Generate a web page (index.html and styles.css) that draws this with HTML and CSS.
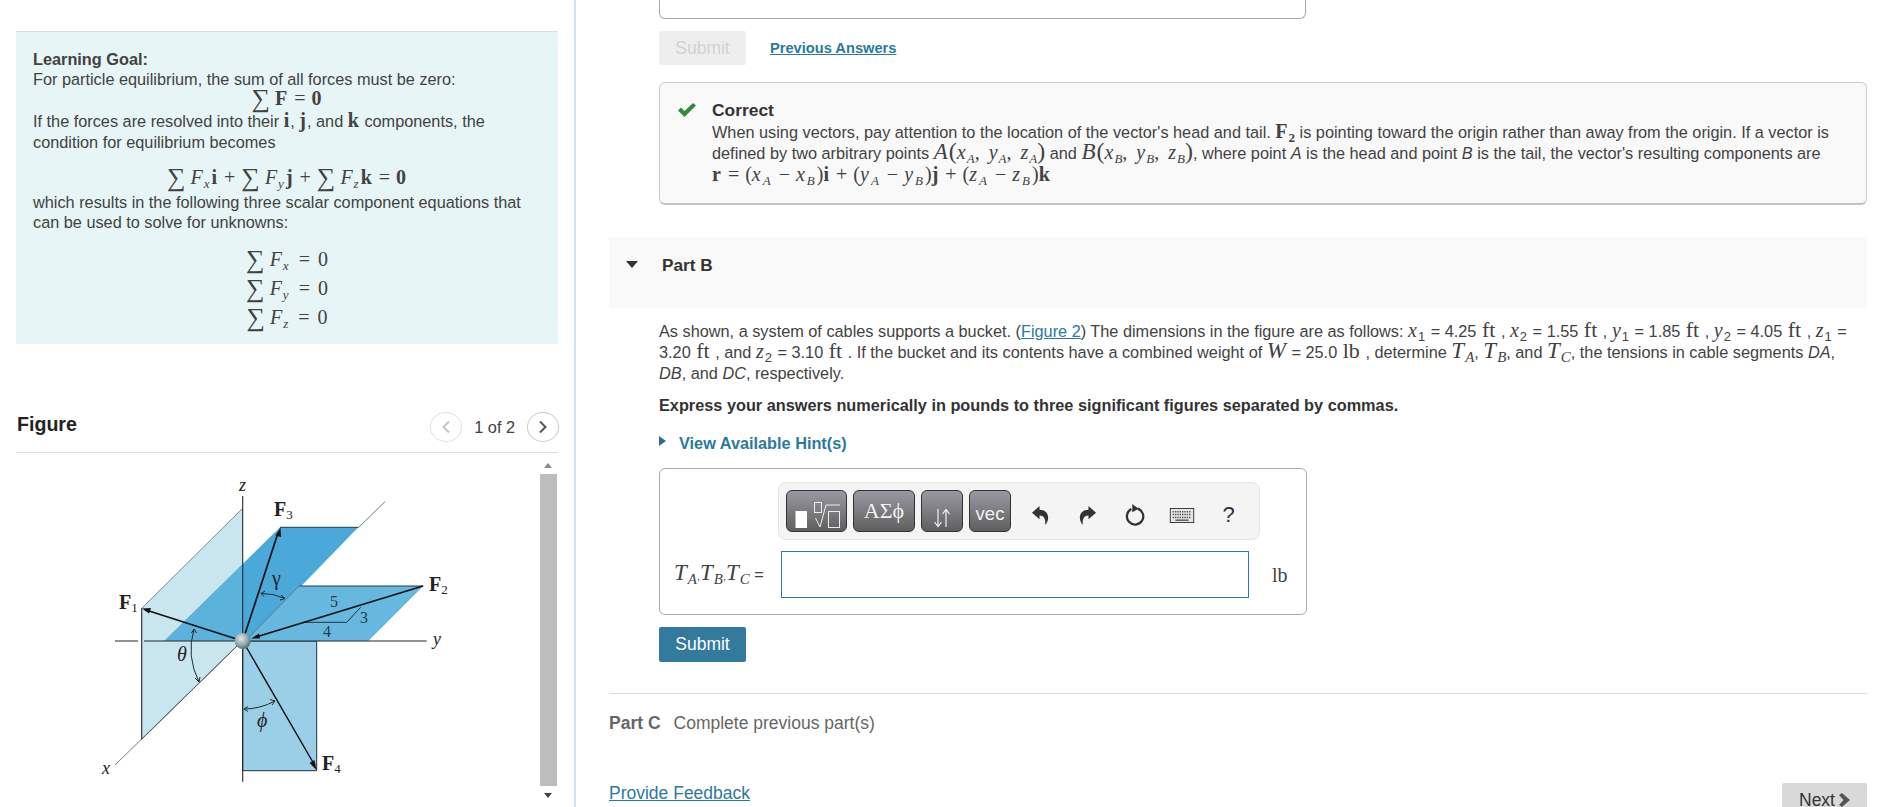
FILE: index.html
```html
<!DOCTYPE html>
<html lang="en">
<head>
    <meta charset="UTF-8">
    <title>Part B - Particle Equilibrium</title>
    <link rel="stylesheet" href="styles.css">
</head>
<body>
<div class="page">
    <div class="left-col">
        <div class="goal-box">
            <div class="goal-title">Learning Goal:</div>
            <div>For particle equilibrium, the sum of all forces must be zero:</div>
            <div class="eq eq-a"><span class="sum">∑</span><b class="vec">F</b><span class="mn op">=</span><b class="vec">0</b></div>
            <div class="after-a">If the forces are resolved into their <b class="vec">i</b>, <b class="vec">j</b>, and <b class="vec">k</b> components, the<br>condition for equilibrium becomes</div>
            <div class="eq eq-b"><span class="sum">∑</span><i class="mi">F<sub>x</sub></i><b class="vec">i</b><span class="mn op">+</span><span class="sum">∑</span><i class="mi">F<sub>y</sub></i><b class="vec">j</b><span class="mn op">+</span><span class="sum">∑</span><i class="mi">F<sub>z</sub></i><b class="vec">k</b><span class="mn op">=</span><b class="vec">0</b></div>
            <div>which results in the following three scalar component equations that<br>can be used to solve for unknowns:</div>
            <div class="eq-stack">
                <div class="eq"><span class="sum">∑</span><i class="mi">F<sub>x</sub></i><span class="mn op">=</span><span class="mn">0</span></div>
                <div class="eq"><span class="sum">∑</span><i class="mi">F<sub>y</sub></i><span class="mn op">=</span><span class="mn">0</span></div>
                <div class="eq"><span class="sum">∑</span><i class="mi">F<sub>z</sub></i><span class="mn op">=</span><span class="mn">0</span></div>
            </div>
        </div>

        <div class="figure-head">
            <span class="figure-title">Figure</span>
            <div class="pager">
                <span class="pager-btn pager-off">
                    <svg width="10" height="14" viewBox="0 0 10 14"><path d="M8 1.5 2.5 7 8 12.5" fill="none" stroke="#c4c4c4" stroke-width="2"/></svg>
                </span>
                <span class="pager-text">1 of 2</span>
                <span class="pager-btn">
                    <svg width="10" height="14" viewBox="0 0 10 14"><path d="M2 1.5 7.5 7 2 12.5" fill="none" stroke="#555" stroke-width="2"/></svg>
                </span>
            </div>
        </div>

        <div class="figure-panel">
            <svg class="diagram" width="360" height="337" viewBox="0 0 360 337">
                <defs>
                    <radialGradient id="ball" cx="0.4" cy="0.35" r="0.7">
                        <stop offset="0" stop-color="#dfe8ea"/>
                        <stop offset="0.6" stop-color="#8fa6ad"/>
                        <stop offset="1" stop-color="#4e6068"/>
                    </radialGradient>
                </defs>
                <polygon points="51.7,138.3 152.7,38.3 152.7,171 51.7,269.3" fill="#c9e6ef"/>
                <polygon points="152.7,171 226.7,171 226.7,300.7 152.7,300.7" fill="#9bcfe7" stroke="#22333c" stroke-width="1"/>
                <polygon points="74,171 190,57.3 152.7,94 152.7,171" fill="#5bb3dc"/>
                <polygon points="152.7,94 190,57.3 268.3,57.3 158,171 152.7,171" fill="#4aa9d8"/>
                <polygon points="209.3,116 333.3,116 278.3,171 156.7,171" fill="#66b8de"/>
                <path d="M190 57.3H268.3M209.3 116H333.3" stroke="#1f3f4f" stroke-width="1" fill="none"/>
                <path d="M295 31.7 268 58M209 116 158 168M147 176 25 295" stroke="#6f7b80" stroke-width="1" fill="none"/>
                <path d="M51.7 138.3 152.7 38.3" stroke="#7d8a90" stroke-width="1" fill="none"/>
                <path d="M51.7 269.3 147 176" stroke="#4b5a60" stroke-width="1" fill="none"/>
                <path d="M25 171H48M54 171H336.7M152.7 26V311.7M51.7 138.3V269.3" stroke="#22282b" stroke-width="1.1" fill="none"/>
                <path d="M213.3 152.3H256.7L270.7 137.3" stroke="#22333c" stroke-width="1" fill="none"/>
                <g stroke="#111" stroke-width="1.7" fill="none">
                    <path d="M152.7 171 56 140"/>
                    <path d="M152.7 171 188 63"/>
                    <path d="M333 116 166 167"/>
                </g>
                <path d="M152.7 171 224 294" stroke="#111" stroke-width="1.4" fill="none"/>
                <g fill="#111">
                    <polygon points="52,138.5 61,138 59,143.5"/>
                    <polygon points="190.5,57.5 191,67 185.500,65.5"/>
                    <polygon points="161,168.5 169,163.5 170,168.5"/>
                    <polygon points="226.5,300 219.5,293 224.5,290"/>
                </g>
                <g stroke="#22282b" stroke-width="1" fill="none">
                    <path d="M171 123.5Q183 123 195 128.5"/>
                    <path d="M104 159Q96 186 109 212"/>
                    <path d="M154 239Q170 239 185 231"/>
                    <path d="M175 121 171 123.5 174 126.5M191 125 195 128.5 190 130M101.5 163 104 159 106.5 163M105 208 109 212 110 207M158 236.5 154 239 158 241.5M180 229.5 185 231 182 235"/>
                </g>
                <circle cx="152.7" cy="171" r="8" fill="url(#ball)"/>
                <g class="fig-label">
                    <text x="29" y="139" class="fig-force">F<tspan class="fig-sub" dy="3">1</tspan></text>
                    <text x="184" y="46" class="fig-force">F<tspan class="fig-sub" dy="3">3</tspan></text>
                    <text x="339" y="121" class="fig-force">F<tspan class="fig-sub" dy="3">2</tspan></text>
                    <text x="232" y="300" class="fig-force">F<tspan class="fig-sub" dy="3">4</tspan></text>
                    <text x="149" y="21" font-style="italic">z</text>
                    <text x="12" y="304" font-style="italic">x</text>
                    <text x="343" y="175" font-style="italic">y</text>
                    <text x="182" y="115" class="fig-greek">γ</text>
                    <text x="87" y="191" class="fig-greek" font-style="italic">θ</text>
                    <text x="167" y="257" class="fig-greek" font-style="italic">ϕ</text>
                    <text x="240" y="137" class="fig-num">5</text>
                    <text x="270" y="153" class="fig-num">3</text>
                    <text x="233" y="167" class="fig-num">4</text>
                </g>
            </svg>
            <div class="scrollbar">
                <span class="arrow-up"></span>
                <div class="thumb"></div>
                <span class="arrow-down"></span>
            </div>
        </div>
    </div>

    <div class="right-col">
        <div class="prev-box"></div>
        <div class="submit-row">
            <button class="btn btn-off">Submit</button>
            <a href="#" class="prev-link">Previous Answers</a>
        </div>

        <div class="correct-box">
            <svg class="check" width="18" height="14" viewBox="0 0 18 14"><path d="M0 7.5 6.5 14 18 2.500 15 0 6.500 8 3 4.500Z" fill="#2f8a3a"/></svg>
            <div class="correct-text">
                <div class="correct-title">Correct</div>
                <div class="correct-line">When using vectors, pay attention to the location of the vector's head and tail. <b class="vec">F<sub>2</sub></b> is pointing toward the origin rather than away from the origin. If a vector is</div>
                <div class="correct-line">defined by two arbitrary points <i class="mi big">A</i><span class="mn big">(</span><i class="mi">x<sub>A</sub></i><span class="mn sep">,</span><i class="mi">y<sub>A</sub></i><span class="mn sep">,</span><i class="mi">z<sub>A</sub></i><span class="mn big">)</span> and <i class="mi big">B</i><span class="mn big">(</span><i class="mi">x<sub>B</sub></i><span class="mn sep">,</span><i class="mi">y<sub>B</sub></i><span class="mn sep">,</span><i class="mi">z<sub>B</sub></i><span class="mn big">)</span>, where point <i>A</i> is the head and point <i>B</i> is the tail, the vector's resulting components are</div>
                <div class="correct-line math-line"><b class="vec">r</b><span class="mn op">=</span><span class="mn">(</span><i class="mi">x<sub>A</sub></i><span class="mn op">−</span><i class="mi">x<sub>B</sub></i><span class="mn">)</span><b class="vec">i</b><span class="mn op">+</span><span class="mn">(</span><i class="mi">y<sub>A</sub></i><span class="mn op">−</span><i class="mi">y<sub>B</sub></i><span class="mn">)</span><b class="vec">j</b><span class="mn op">+</span><span class="mn">(</span><i class="mi">z<sub>A</sub></i><span class="mn op">−</span><i class="mi">z<sub>B</sub></i><span class="mn">)</span><b class="vec">k</b></div>
            </div>
        </div>

        <div class="part-bar">
            <span class="part-caret"></span>
            <span class="part-name">Part B</span>
        </div>

        <div class="part-body">
            <p class="problem">As shown, a system of cables supports a bucket. (<a href="#">Figure 2</a>) The dimensions in the figure are as follows: <i class="mi">x</i><sub class="num">1</sub> = 4.25 <span class="mn">ft</span> , <i class="mi">x</i><sub class="num">2</sub> = 1.55 <span class="mn">ft</span> , <i class="mi">y</i><sub class="num">1</sub> = 1.85 <span class="mn">ft</span> , <i class="mi">y</i><sub class="num">2</sub> = 4.05 <span class="mn">ft</span> , <i class="mi">z</i><sub class="num">1</sub> =<br>3.20 <span class="mn">ft</span> , and <i class="mi">z</i><sub class="num">2</sub> = 3.10 <span class="mn">ft</span> . If the bucket and its contents have a combined weight of <i class="mi big">W</i> = 25.0 <span class="mn">lb</span> , determine <i class="mi big">T<sub>A</sub></i>, <i class="mi big">T<sub>B</sub></i>, and <i class="mi big">T<sub>C</sub></i>, the tensions in cable segments <i>DA</i>,<br><i>DB</i>, and <i>DC</i>, respectively.</p>
            <p class="express">Express your answers numerically in pounds to three significant figures separated by commas.</p>
            <div class="hint-row">
                <span class="hint-caret"></span>
                <a href="#" class="hint-link">View Available Hint(s)</a>
            </div>

            <div class="answer-box">
                <div class="toolbar">
                    <span class="tool tool-templates">
                        <svg width="52" height="34" viewBox="0 0 52 34">
                            <rect x="4.5" y="17" width="11.5" height="17" fill="#fff"/>
                            <g fill="none" stroke="#eee" stroke-width="1">
                                <rect x="23.500" y="8.500" width="7" height="10"/>
                                <path d="M24.500 24 29 33 35 11H49"/>
                                <rect x="37.500" y="17.500" width="11" height="16"/>
                            </g>
                        </svg>
                    </span>
                    <span class="tool tool-greek">ΑΣϕ</span>
                    <span class="tool tool-arrows">
                        <svg width="18" height="20" viewBox="0 0 18 20"><path d="M5 1V18M1.500 14 5 18.500 8.500 14M13 19V2M9.500 6 13 1.500 16.500 6" fill="none" stroke="#f2f2f2" stroke-width="1.200"/></svg>
                    </span>
                    <span class="tool tool-vec">vec</span>
                    <span class="tool-icons">
                        <span class="tool-slot"><svg width="19" height="21" viewBox="0 0 20 22"><path d="M1 8 9 1V5C15 5 18.500 9 18 14 17.800 17 16.500 19.500 15 21 15.500 15 14 11 9 11V15Z" fill="#333"/></svg></span>
                        <span class="tool-slot"><svg width="19" height="21" viewBox="0 0 20 22"><path d="M19 8 11 1V5C5 5 1.500 9 2 14 2.200 17 3.500 19.500 5 21 4.500 15 6 11 11 11V15Z" fill="#333"/></svg></span>
                        <span class="tool-slot"><svg width="20" height="24" viewBox="0 0 22 24"><path d="M7 5.500A9 9 0 1 0 14 5" fill="none" stroke="#333" stroke-width="2.500"/><path d="M8 0 15 5 8 9Z" fill="#333"/></svg></span>
                        <span class="tool-slot"><svg width="26" height="15" viewBox="0 0 26 16"><rect x=".5" y=".5" width="25" height="15" fill="#e6e6e6" stroke="#333"/><path d="M3 4H23M3 7H23M3 10H23" stroke="#555" stroke-width="1.600" stroke-dasharray="1.500 1"/><path d="M6 13H20" stroke="#555" stroke-width="1.500"/></svg></span>
                        <span class="tool-slot tool-help">?</span>
                    </span>
                </div>
                <div class="answer-row">
                    <label class="answer-label"><i class="mi big">T<sub>A</sub></i><span class="comma">,</span><i class="mi big">T<sub>B</sub></i><span class="comma">,</span><i class="mi big">T<sub>C</sub></i> =</label>
                    <input type="text" class="answer-input">
                    <span class="unit">lb</span>
                </div>
            </div>
            <button class="btn btn-on">Submit</button>
        </div>

        <div class="part-c"><b>Part C</b><span>Complete previous part(s)</span></div>

        <div class="bottom-row">
            <a href="#" class="feedback">Provide Feedback</a>
            <span class="next-btn">Next <svg width="11" height="14" viewBox="0 0 11 14"><path d="M3 0 11 7 3 14 0 12 4.500 7 0 2Z" fill="#555"/></svg></span>
        </div>
    </div>
</div>
</body>
</html>
```

FILE: styles.css
```css
html, body { margin: 0; height: 100%; overflow: hidden; background: #fff; }
body { font-family: "Liberation Sans", Arial, sans-serif; font-size: 16.3px; line-height: 20px; color: #424242; }
a { color: #2b7a9b; }
p { margin: 0; }

.page { display: grid; grid-template-columns: 576px 1fr; height: 807px; overflow: hidden; }

/* math text */
.mi { font-family: "Liberation Serif", serif; font-style: italic; font-size: 20px; letter-spacing: 1px; line-height: 0; }
.mi.big { font-size: 23px; }
.mn { font-family: "Liberation Serif", serif; font-size: 20px; line-height: 0; }
.mn.big { font-size: 24px; }
.op { margin: 0 3px; }
.sep { margin-right: 9px; }
.vec { font-family: "Liberation Serif", serif; font-weight: bold; font-size: 20px; letter-spacing: 1px; line-height: 0; }
.sum { font-family: "Liberation Serif", serif; font-size: 26px; line-height: 0; margin-right: 5px; vertical-align: -2px; }
sub { font-size: 65%; line-height: 0; letter-spacing: 0; vertical-align: -4px; }
sub.num { font-size: 13px; margin-right: 1px; }

/* left column */
.left-col { border-right: 2px solid #d5e2ec; box-sizing: border-box; padding: 31px 16px 0; }
.goal-box { background: #e7f5f6; border-top: 1px solid #dcdfe0; height: 313px; box-sizing: border-box; padding: 17px 17px 0; }
.goal-box .op { margin: 0 6px; }
.goal-box sub { margin-right: 2px; }
.goal-title { font-weight: bold; }
.eq { text-align: center; white-space: nowrap; }
.eq-a { height: 19px; line-height: 19px; padding-top: 1px; }
.after-a { margin-top: 2px; line-height: 21px; }
.eq-b { height: 24px; line-height: 24px; margin: 13px 0 2px; }
.eq-stack { margin-top: 14px; }
.eq-stack .eq { height: 29px; line-height: 29px; }
.eq-stack .op { margin: 0 8px; }

.figure-head { display: flex; justify-content: space-between; align-items: center; height: 42px; margin-top: 66px; border-bottom: 1px solid #dcdfe0; }
.figure-title { font-size: 19.600px; font-weight: bold; color: #222; margin: -14px 0 0 1px; }
.pager { display: flex; align-items: center; gap: 12px; margin: -8px -1px 0 0; }
.pager-btn { width: 30px; height: 28px; border: 1px solid #ccc; border-radius: 50%; display: flex; align-items: center; justify-content: center; }
.pager-off { border-color: #e2e2e2; }

.figure-panel { display: flex; justify-content: space-between; height: 355px; }
.diagram { margin: 17px 0 0 74px; }
.fig-label text { font-family: "Liberation Serif", serif; font-size: 18px; fill: #222; }
.fig-label .fig-force { font-size: 20px; font-weight: bold; }
.fig-label .fig-greek { font-size: 20px; }
.fig-label .fig-sub { font-size: 13px; font-weight: normal; }
.fig-label .fig-num { font-size: 16px; fill: #2a3a44; }
.scrollbar { width: 20px; display: flex; flex-direction: column; align-items: center; }
.thumb { width: 17px; height: 312px; background: #bdbdbd; margin: 6px 0 7px; }
.arrow-up { margin-top: 10px; border: 4.500px solid transparent; border-top: 0; border-bottom: 5px solid #8a8a8a; }
.arrow-down { border: 4.500px solid transparent; border-bottom: 0; border-top: 5px solid #444; }

/* right column */
.right-col { padding: 0 34px 0 33px; }
.prev-box { height: 19px; margin: -10px 225px 0 50px; border: 1px solid #aaa; border-top: 0; border-radius: 0 0 6px 6px; padding-top: 9px; width: 645px; }
.submit-row { display: flex; align-items: center; gap: 24px; margin: 12px 0 0 50px; }
.btn { font-family: inherit; font-size: 17.500px; width: 87px; height: 34px; border: 0; border-radius: 2px; padding: 0; }
.btn-off { background: #eeeeee; color: #d2d2d2; }
.btn-on { background: #347a9c; color: #fff; height: 35px; }
.prev-link { font-size: 14.650px; font-weight: bold; }

.correct-box { display: flex; margin: 17px 0 0 50px; height: 123px; box-sizing: border-box; background: #f9f9f9; border: 1px solid #ccc; border-bottom: 2px solid #c4c4c4; border-radius: 6px; padding: 17px 16px 0 18px; }
.check { flex: none; margin: 3px 16px 0 0; }
.correct-text { white-space: nowrap; }
.correct-title { font-size: 17.400px; font-weight: bold; color: #333; height: 22px; line-height: 20px; }
.correct-line { height: 21px; line-height: 21px; }
.math-line { margin-top: 1px; }
.math-line .op { margin: 0 6px; }
.math-line .mi { letter-spacing: 2px; }
.math-line sub { margin-right: 2px; }

.part-bar { display: flex; height: 71px; margin-top: 32px; background: #f9f9f9; padding: 18px 0 0 17px; box-sizing: border-box; }
.part-caret { border: 6.500px solid transparent; border-bottom: 0; border-top: 7px solid #333; margin-top: 6px; }
.part-name { font-size: 17.200px; font-weight: bold; color: #333; margin-left: 24px; }

.part-body { margin-left: 50px; }
.problem { margin-top: 13px; line-height: 21px; white-space: nowrap; }
.problem .mn { font-size: 22px; margin: 0 1px; }
.express { margin-top: 11px; font-weight: bold; color: #333; }
.hint-row { display: flex; align-items: center; margin-top: 18px; }
.hint-caret { border: 5px solid transparent; border-right: 0; border-left: 7px solid #2b6e8d; margin-right: 13px; margin-top: -4px; }
.hint-link { font-weight: bold; text-decoration: none; }

.answer-box { width: 648px; height: 147px; margin-top: 15px; box-sizing: border-box; border: 1px solid #aaa; border-radius: 6px; padding: 13px 0 0 118px; }
.toolbar { display: flex; align-items: center; gap: 6px; width: 482px; height: 58px; box-sizing: border-box; background: #f4f4f4; border: 1px solid #e4e4e4; border-radius: 8px; padding-left: 7px; }
.tool { height: 42px; box-sizing: border-box; display: flex; align-items: center; justify-content: center; background: linear-gradient(#9a99a2, #5f5f5f); border: 1px solid #333; border-radius: 6px; color: #f2f2f2; }
.tool-templates { width: 61px; }
.tool-greek { width: 62px; font-family: "Liberation Serif", serif; font-size: 22px; }
.tool-arrows { width: 42px; padding-top: 14px; }
.tool-vec { width: 42px; font-size: 18.500px; padding-top: 5px; }
.tool-icons { display: flex; align-items: center; padding-top: 8px; }
.tool-slot { width: 47px; display: flex; justify-content: center; }
.tool-help { font-size: 22px; color: #333; }
.answer-row { display: flex; align-items: center; margin: 11px 0 0 -104px; }
.answer-label { width: 107px; white-space: nowrap; }
.comma { font-size: 11px; }
.answer-input { width: 468px; height: 47px; box-sizing: border-box; border: 1px solid #2f7a9b; background: #fff; outline: 0; }
.unit { font-family: "Liberation Serif", serif; font-size: 20px; margin-left: 23px; }
.btn-on { display: block; margin-top: 12px; }

.part-c { margin-top: 31px; border-top: 1px solid #ddd; padding-top: 19px; font-size: 17.500px; color: #666; display: flex; gap: 13px; }
.bottom-row { display: flex; justify-content: space-between; align-items: flex-start; margin-top: 50px; font-size: 17.500px; }
.next-btn { display: flex; align-items: center; gap: 4px; justify-content: center; width: 85px; height: 32px; background: #d9d9d9; border-radius: 2px; color: #333; padding-top: 2px; box-sizing: border-box; }
```
